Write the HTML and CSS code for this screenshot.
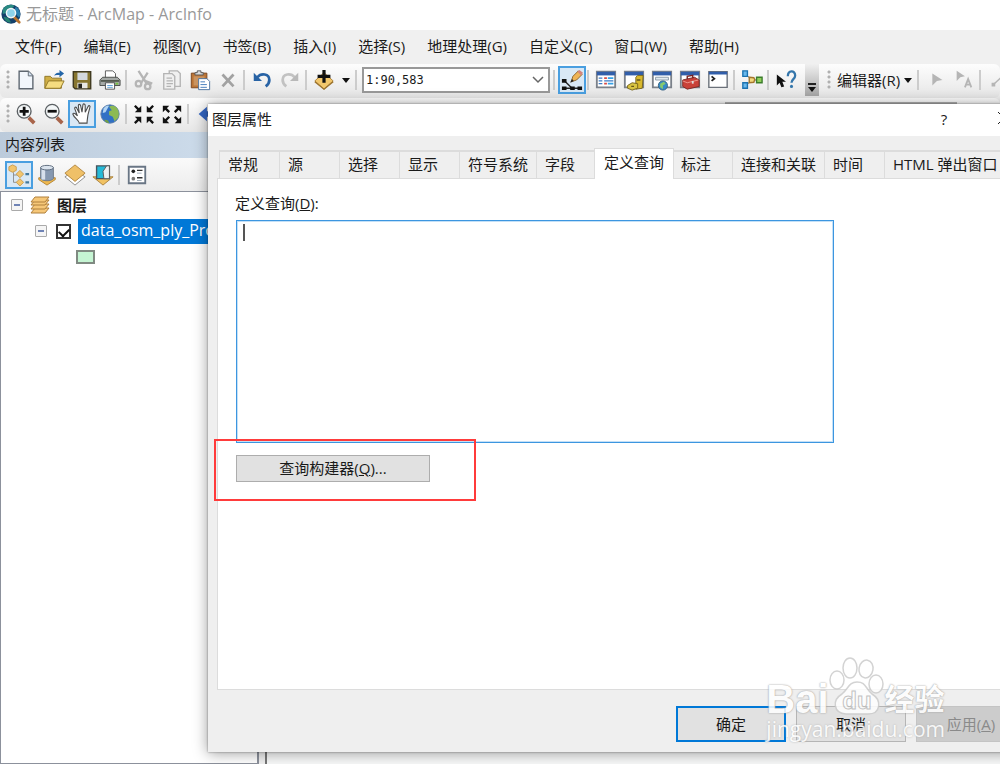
FILE: index.html
```html
<!DOCTYPE html>
<html lang="zh-CN">
<head>
  <meta charset="UTF-8">
  <meta name="viewport" content="width=device-width, initial-scale=1.0">
  <title>无标题 - ArcMap - ArcInfo</title>
  <link rel="stylesheet" href="styles.css">
</head>
<body>
  <div class="app">
    <header class="titlebar">
      <svg class="app-icon" viewBox="0 0 24 24">
        <circle cx="12" cy="12" r="10.5" fill="#14406b"/>
        <path d="M3 7C6 2 12 1 16 3l-3 3-4 0-2 5-4 1z" fill="#2a8a82"/>
        <path d="M17 4c5 3 6 8 4 12l-3-3-2-5z" fill="#2b7fae"/>
        <path d="M4 15l5 1 3 5C8 22 5 19 4 15z" fill="#248272"/>
        <path d="M15 15l6 6" stroke="#b9722c" stroke-width="3" stroke-linecap="round"/>
        <circle cx="12" cy="11" r="5" fill="#8fd3ea" stroke="#f2f6f8" stroke-width="1.6"/>
      </svg>
      <span>无标题 - ArcMap - ArcInfo</span>
    </header>

    <nav class="menubar">
      <button>文件(F)</button>
      <button>编辑(E)</button>
      <button>视图(V)</button>
      <button>书签(B)</button>
      <button>插入(I)</button>
      <button>选择(S)</button>
      <button>地理处理(G)</button>
      <button>自定义(C)</button>
      <button>窗口(W)</button>
      <button>帮助(H)</button>
    </nav>

    <div class="toolbar">
      <span class="grip"></span>
      <button class="tool" aria-label="新建">
        <svg viewBox="0 0 24 24"><path d="M4.5 2.5h10l5 5v14h-15z" fill="#f1f6fc" stroke="#5d6670" stroke-width="1.5"/><path d="M14.500 2.500v5h5" fill="#d4e2f2" stroke="#5d6670"/></svg>
      </button>
      <button class="tool" aria-label="打开">
        <svg viewBox="0 0 24 24"><path d="M2 21V8h6l2 2h10v11z" fill="#cfae45" stroke="#8d7425"/><path d="M2 21l4-8h17l-4 8z" fill="#f5dc80" stroke="#8d7425"/><path d="M12 7c2-3 4-3 6-3V1l5 4-5 4V6.500c-2 0-4 0-6 .5z" fill="#2466a8"/></svg>
      </button>
      <button class="tool" aria-label="保存">
        <svg viewBox="0 0 24 24"><path d="M2.500 3h19v18.500h-17l-2-2z" fill="#877630" stroke="#403a20" stroke-width="1.500"/><path d="M7 4h11v8H7z" fill="#d3d8dd"/><path d="M7 15h11v6H7z" fill="#e8e8e4"/><path d="M8 16h4v5H8z" fill="#24241e"/></svg>
      </button>
      <button class="tool" aria-label="打印">
        <svg viewBox="0 0 24 24"><path d="M7 10V2h8l3 3v5" fill="#fff" stroke="#555"/><path d="M1 12l3-3h16l3 3v6H1z" fill="#a5a9a6" stroke="#454845"/><path d="M2 12h20v2H2z" fill="#54594f"/><path d="M18 16h3" stroke="#74c33e" stroke-width="2"/><path d="M7 15h10v7H7z" fill="#fff" stroke="#4a4a4a"/><path d="M9 18h6M9 20h6" stroke="#579bd2"/></svg>
      </button>
      <span class="sep"></span>
      <button class="tool" aria-label="剪切" disabled>
        <svg viewBox="0 0 24 24" fill="none" stroke="#b5b5b5" stroke-width="2.5"><path d="M6 2l9 14M16 4l-7 11"/><circle cx="6" cy="16" r="3"/><circle cx="16" cy="19" r="3"/><path d="M13 13l8 3"/></svg>
      </button>
      <button class="tool" aria-label="复制" disabled>
        <svg viewBox="0 0 24 24" fill="#f0f0f0" stroke="#b4b4b4" stroke-width="1.5"><path d="M9 2h9l3 3v14H9z"/><path d="M3 5h9l3 3v14H3z"/><path d="M6 10h6M6 13h7M6 16h7M6 19h5"/></svg>
      </button>
      <button class="tool" aria-label="粘贴">
        <svg viewBox="0 0 24 24"><path d="M2.500 4.500h17v16h-17z" fill="#ba7436" stroke="#77431d"/><path d="M6.500 6.500V4H9V2h4v2h2.500v2.500z" fill="#d9d9d9" stroke="#555"/><path d="M5 8h12v10H5z" fill="#c9935f"/><path d="M10.500 10.500h9l3 3v9h-12z" fill="#fff" stroke="#47709f"/><path d="M12.500 14h5M12.500 17h7M12.500 20h7" stroke="#3c76b8"/></svg>
      </button>
      <button class="tool" aria-label="删除" disabled>
        <svg viewBox="0 0 24 24"><path d="M6 6l12 13M18 6L6 19" stroke="#a2a2a2" stroke-width="3"/></svg>
      </button>
      <span class="sep"></span>
      <button class="tool" aria-label="撤消">
        <svg viewBox="0 0 24 24"><path d="M7 9c4-5 13-4 13 3 0 3-1 5-4 7" fill="none" stroke="#2863a5" stroke-width="3"/><path d="M3 4v9h9z" fill="#2863a5"/></svg>
      </button>
      <button class="tool" aria-label="恢复" disabled>
        <svg viewBox="0 0 24 24"><path d="M17 9C13 4 4 5 4 12c0 3 1 5 4 7" fill="none" stroke="#c2c2c2" stroke-width="3"/><path d="M21 4v9h-9z" fill="#b9b9b9"/></svg>
      </button>
      <span class="sep"></span>
      <button class="tool" aria-label="添加数据">
        <svg viewBox="0 0 24 24"><path d="M2 13l10-9 10 9-10 9z" fill="#f2c76c" stroke="#a87d35"/><path d="M2 14l10 8 10-8" fill="none" stroke="#9c742f" stroke-width="1.500"/><path d="M12 1v14M5 8h14" stroke="#111" stroke-width="3.500"/></svg>
      </button>
      <button class="drop" aria-label="添加数据选项"><span class="caret"></span></button>
      <span class="sep"></span>
      <div class="scale">
        <select aria-label="比例尺"><option>1:90,583</option></select>
        <svg viewBox="0 0 12 8"><path d="M1 1l5 5 5-5" fill="none" stroke="#666" stroke-width="1.5"/></svg>
      </div>
      <span class="sep"></span>
      <button class="tool active" aria-label="编辑器工具条">
        <svg viewBox="0 0 24 24"><path d="M4 13l8 8M3 21h18" stroke="#222" stroke-width="1.500"/><path d="M1 11h5v4H1zM1 19h5v4H1zM10 19h5v4h-5zM18 19h5v4h-5z" fill="#111"/><path d="M11 14l2-6 6-6 4 4-6 6z" fill="#efb456" stroke="#89622c"/><path d="M18 3l2-2 4 3-2 3z" fill="#d3857d"/><path d="M10 15l2-4 2 2z" fill="#222"/></svg>
      </button>
      <span class="sep"></span>
      <button class="tool" aria-label="内容列表">
        <svg viewBox="0 0 24 24"><path d="M2 3h20v17H2z" fill="#fff" stroke="#7b818a" stroke-width="2"/><path d="M2 3h20v4H2z" fill="#315eaa"/><path d="M10 10h3M10 16h3" stroke="#d84b46" stroke-width="2"/><path d="M4 10h4M4 13h4M4 16h4M10 13h10" stroke="#3d7bc5" stroke-width="1.500"/><path d="M14 10h6M14 16h6" stroke="#35a1e7" stroke-width="2"/></svg>
      </button>
      <button class="tool" aria-label="目录">
        <svg viewBox="0 0 24 24"><path d="M2 3h20v17H2z" fill="#fff" stroke="#7b818a" stroke-width="2"/><path d="M2 3h20v4H2z" fill="#315eaa"/><path d="M14 9l2-2h6l-1 14-7 1z" fill="#d9b92e" stroke="#75631b"/><path d="M5 18l5-3 6 1v5l-6 2-5-2z" fill="#d9c442" stroke="#75631b"/><path d="M15 12h4M9 19h3" stroke="#665619" stroke-width="1.500"/></svg>
      </button>
      <button class="tool" aria-label="搜索">
        <svg viewBox="0 0 24 24"><path d="M2 3h20v17H2z" fill="#fff" stroke="#7b818a" stroke-width="2"/><path d="M2 3h20v4H2z" fill="#315eaa"/><path d="M5 9h14v3H5z" fill="#e2eaf0" stroke="#8897a4"/><circle cx="13" cy="18" r="5" fill="#358bc7" stroke="#356080"/><path d="M10 16l4-2 2 2-3 2 0 4-3-2z" fill="#87c96d"/></svg>
      </button>
      <button class="tool" aria-label="工具箱">
        <svg viewBox="0 0 24 24"><path d="M2 3h20v17H2z" fill="#fff" stroke="#7b818a" stroke-width="2"/><path d="M2 3h20v4H2z" fill="#315eaa"/><path d="M4 12l13-3 5 3v7L9 22l-5-3z" fill="#c94138" stroke="#7a2925"/><path d="M4 13l5 2 12-3" fill="none" stroke="#f19b91"/><path d="M9 11V8l6-1v3" fill="none" stroke="#722" stroke-width="1.500"/><path d="M15 13v3" stroke="#ddd" stroke-width="2"/></svg>
      </button>
      <button class="tool" aria-label="Python">
        <svg viewBox="0 0 24 24"><path d="M2 3h20v17H2z" fill="#fff" stroke="#6b717a" stroke-width="1.500"/><path d="M2 3h20v3H2z" fill="#315eaa"/><path d="M5 8l3 2.500L5 13" fill="none" stroke="#222" stroke-width="2"/></svg>
      </button>
      <span class="sep"></span>
      <button class="tool" aria-label="模型构建器">
        <svg viewBox="0 0 24 24"><path d="M6 6l5 6-5 6M14 12h4" fill="none" stroke="#666"/><path d="M2 2h5v6H2zM2 15h5v6H2z" fill="#69b9ed" stroke="#1c73b1" stroke-width="1.500"/><path d="M9 9l5 .5 1 2-1 3-5 .5z" fill="#f3d77c" stroke="#a3762c" stroke-width="1.500"/><path d="M17 9h6v6h-6z" fill="#91cf5a" stroke="#3b7c2b" stroke-width="1.500"/></svg>
      </button>
      <span class="sep"></span>
      <button class="tool" aria-label="这是什么?">
        <svg viewBox="0 0 24 24"><path d="M2 6v12l3-3 2 5 3-1-2-5h4z" fill="#111"/><path d="M14 8c0-7 8-7 8-1 0 4-4 4-4 8" fill="none" stroke="#3476ab" stroke-width="2.500"/><circle cx="18" cy="19" r="1.700" fill="#3476ab"/></svg>
      </button>
      <button class="overflow" aria-label="工具栏选项"><span class="bar"></span><span class="caret"></span></button>
      <span class="grip"></span>
      <button class="editor">编辑器(R)<span class="caret"></span></button>
      <span class="sep"></span>
      <button class="tool" aria-label="编辑工具" disabled>
        <svg viewBox="0 0 24 24"><path d="M8 5l11 7-6 1-5 5z" fill="#b5b5b5"/></svg>
      </button>
      <button class="tool" aria-label="编辑注记工具" disabled>
        <svg viewBox="0 0 24 24"><path d="M4 2l9 6-5 1-4 4z" fill="#b5b5b5"/><path d="M13 20l3.500-9 3.500 9M14.500 17h4" fill="none" stroke="#b5b5b5" stroke-width="2"/></svg>
      </button>
      <span class="sep"></span>
      <button class="tool" aria-label="直线段" disabled>
        <svg viewBox="0 0 24 24"><path d="M7 17L19 6" stroke="#b5b5b5" stroke-width="1.500"/><path d="M5 15h4v4H5zM17 4h4v4h-4z" fill="#b5b5b5"/></svg>
      </button>
    </div>

    <div class="toolbar">
      <span class="grip"></span>
      <button class="tool" aria-label="放大">
        <svg viewBox="0 0 24 24"><path d="M15 16l6 6" stroke="#a8644a" stroke-width="4"/><circle cx="10" cy="9" r="7.500" fill="#f4f7f8" stroke="#5c6164" stroke-width="1.500"/><path d="M5 9h10M10 4v10" stroke="#111" stroke-width="3"/></svg>
      </button>
      <button class="tool" aria-label="缩小">
        <svg viewBox="0 0 24 24"><path d="M15 16l6 6" stroke="#a8644a" stroke-width="4"/><circle cx="10" cy="9" r="7.500" fill="#f4f7f8" stroke="#5c6164" stroke-width="1.500"/><path d="M5 9h10" stroke="#111" stroke-width="3"/></svg>
      </button>
      <button class="tool active" aria-label="平移">
        <svg viewBox="0 0 24 24"><path d="M9 22c0-3-6-6-7-10 1-2 3 0 5 2L4 6c0-2 2-2 2.500 0L9 11 8 3c0-2 2-2 2.500 0l1.500 7 1-8c.5-2 2.500-1 2.500 1l0 7 3-6c1-2 3-1 2 1l-2 8c-.5 4-1 6-1 9z" fill="#fff" stroke="#4d4d4d" stroke-width="1.200"/></svg>
      </button>
      <button class="tool" aria-label="全图">
        <svg viewBox="0 0 24 24"><circle cx="12" cy="12" r="10" fill="#3070c5" stroke="#6080a8"/><path d="M11 4c3-2 7-1 9 2 2 4 2 6 1 10l-4 4-2-5-4-2 0-4 3-1z" fill="#8cba54"/><path d="M6 18l4 1 1 3c-3 0-5-2-5-4z" fill="#729f43"/><path d="M5 6c2-3 4-3 6-3l-4 7-3 1z" fill="#b2d5f3"/></svg>
      </button>
      <span class="sep"></span>
      <button class="tool" aria-label="固定比例放大">
        <svg viewBox="0 0 24 24"><path d="M2 3l5 5M22 3l-5 5M2 22l5-5M22 22l-5-5" stroke="#111" stroke-width="2.500"/><path d="M9 3v7H2zM15 3v7h7zM9 22v-7H2zM15 22v-7h7z" fill="#111"/></svg>
      </button>
      <button class="tool" aria-label="固定比例缩小">
        <svg viewBox="0 0 24 24"><path d="M4 5l5 5M20 5l-5 5M4 20l5-5M20 20l-5-5" stroke="#111" stroke-width="2.500"/><path d="M2 3h7l-7 7zM22 3h-7l7 7zM2 22h7l-7-7zM22 22h-7l7-7z" fill="#111"/></svg>
      </button>
      <span class="sep"></span>
      <button class="tool" aria-label="返回上一视图">
        <svg viewBox="0 0 24 24"><path d="M4 12l9-8v5h9v6h-9v5z" fill="#3264c0"/></svg>
      </button>
      <div class="docked-edge"></div>
    </div>

    <main class="workspace">
      <aside class="toc">
        <h2>内容列表</h2>
        <div class="toc-tools">
          <button class="tool active" aria-label="按绘制顺序列出">
            <svg viewBox="0 0 24 24"><path d="M6 9v11h6M6 12h6" fill="none" stroke="#8b8b8b"/><path d="M1 3l4-2 4 2v4L5 9 1 7z" fill="#f2c56d" stroke="#c99b4b"/><path d="M9 11l4-4 4 4-4 4zM9 20l4-4 4 4-4 4z" fill="#f2c56d" stroke="#c99b4b"/><path d="M19 11h4M19 20h4" stroke="#42799e" stroke-width="2.500"/></svg>
          </button>
          <button class="tool" aria-label="按源列出">
            <svg viewBox="0 0 24 24"><path d="M3 15h18v2l-9 6-9-6z" fill="#efb84e" stroke="#b1812e"/><path d="M5 4v12c2 3 12 3 14 0V4z" fill="#8698b0" stroke="#6c7989"/><path d="M8 6v11" stroke="#d7e0ec" stroke-width="4"/><ellipse cx="12" cy="4" rx="7" ry="2.500" fill="#dae3ed" stroke="#596778"/></svg>
          </button>
          <button class="tool" aria-label="按可见性列出">
            <svg viewBox="0 0 24 24"><path d="M1 14l11 9 11-9-11-7z" fill="#fff" stroke="#888"/><path d="M1 10l11-9 11 9-11 9z" fill="#efc068" stroke="#b1843c"/></svg>
          </button>
          <button class="tool" aria-label="按选择列出">
            <svg viewBox="0 0 24 24"><path d="M1 14h22l-11 9z" fill="#f1c262" stroke="#a97e37"/><path d="M5 2h14v14H5z" fill="#25bad8" stroke="#49545c" stroke-width="1.500"/><path d="M19 2v14h-6l-1-8 4-6z" fill="#edf1f2" stroke="#555"/></svg>
          </button>
          <span class="sep"></span>
          <button class="tool" aria-label="选项">
            <svg viewBox="0 0 24 24"><path d="M3 3h18v18H3z" fill="#fff" stroke="#697685" stroke-width="2"/><circle cx="8" cy="8" r="2" fill="#222"/><circle cx="8" cy="16" r="2" fill="#777"/><path d="M12 7h6M12 15h6" stroke="#333" stroke-width="1.500"/><path d="M12 10h5M12 18h5" stroke="#9aa8b6"/></svg>
          </button>
        </div>
        <div class="tree">
          <div class="node">
            <button class="toggle" aria-label="折叠"></button>
            <svg class="layers-icon" viewBox="0 0 20 18"><g fill="#f6c778" stroke="#b0803d"><path d="M1 17l4-5h14l-4 5z"/><path d="M1 13l4-5h14l-4 5z"/><path d="M1 9l4-5h14l-4 5z"/><path d="M1 6l4-5h14l-4 5z"/></g></svg>
            <strong>图层</strong>
          </div>
          <div class="node child">
            <button class="toggle" aria-label="折叠"></button>
            <input type="checkbox" id="layer" checked>
            <label for="layer">data_osm_ply_Project</label>
          </div>
          <div class="node symbol"><span class="swatch"></span></div>
        </div>
      </aside>
      <section class="map"></section>
    </main>

    <section class="dialog" role="dialog" aria-labelledby="dialog-title">
      <div class="dialog-title">
        <h1 id="dialog-title">图层属性</h1>
        <button aria-label="帮助">?</button>
        <button aria-label="关闭"><svg viewBox="0 0 14 14"><path d="M1 1l12 12M13 1L1 13" stroke="#222"/></svg></button>
      </div>
      <div class="dialog-body">
        <div class="tabs" role="tablist">
          <button role="tab">常规</button>
          <button role="tab">源</button>
          <button role="tab">选择</button>
          <button role="tab">显示</button>
          <button role="tab">符号系统</button>
          <button role="tab">字段</button>
          <button role="tab" class="selected" aria-selected="true">定义查询</button>
          <button role="tab">标注</button>
          <button role="tab">连接和关联</button>
          <button role="tab">时间</button>
          <button role="tab">HTML 弹出窗口</button>
        </div>
        <div class="panel" role="tabpanel">
          <label for="query">定义查询(<u>D</u>):</label>
          <div class="query">
            <textarea id="query"></textarea>
            <span class="text-cursor"></span>
          </div>
          <div class="builder">
            <button>查询构建器(<u>Q</u>)...</button>
            <span class="highlight"></span>
          </div>
        </div>
        <div class="actions">
          <button class="default">确定</button>
          <button>取消</button>
          <button disabled>应用(<u>A</u>)</button>
        </div>
      </div>
    </section>

    <div class="watermark">
      <div class="brand">
        <span class="bai">Bai</span>
        <svg class="paw" viewBox="0 0 56 58">
          <g fill="#fff" stroke="#ccc" stroke-width="1.5">
            <ellipse cx="8" cy="23" rx="7" ry="9"/>
            <ellipse cx="21" cy="11" rx="7" ry="10"/>
            <ellipse cx="37" cy="12" rx="7" ry="9" transform="rotate(10 37 12)"/>
            <ellipse cx="47" cy="27" rx="7" ry="9"/>
            <path d="M28 25c-8 0-9 7-15 12-10 6-9 19 4 20 7 0 15 0 22 0 13 0 14-14 4-20-7-6-6-12-15-12z"/>
          </g>
          <text x="28" y="52" text-anchor="middle">du</text>
        </svg>
        <span class="jy">经验</span>
      </div>
      <span class="site">jingyan.baidu.com</span>
    </div>
  </div>
</body>
</html>
```
FILE: styles.css
```css
* {
  box-sizing: border-box;
}
body {
  margin: 0;
  font-family: "Open Sans", "Noto Sans CJK SC", sans-serif;
  font-size: 15px;
  line-height: 20px;
  color: #1a1a1a;
}
button, select, textarea {
  font: inherit;
  color: inherit;
  margin: 0;
}
button {
  padding: 0;
  border: none;
  background: none;
  white-space: nowrap;
}
h1, h2 {
  margin: 0;
  font-size: 15px;
  font-weight: normal;
}
.app {
  position: relative;
  display: flex;
  flex-direction: column;
  height: 100vh;
  overflow: hidden;
  background: #f0f0f0;
}

/* window title and menu */
.titlebar {
  display: flex;
  align-items: center;
  gap: 4px;
  height: 30px;
  padding-bottom: 2px;
  background: #fff;
  color: #999;
  font-size: 16px;
}
.app-icon {
  width: 22px;
  height: 22px;
}
.menubar {
  display: flex;
  align-items: center;
  gap: 22px;
  height: 34px;
  padding: 0 0 2px 15px;
}

/* toolbars */
.toolbar {
  display: flex;
  flex: none;
  align-items: center;
  height: 34px;
  padding: 0 0 2px 3px;
  border-radius: 6px;
  background: linear-gradient(#fdfdfd, #e6e6e6);
}
.toolbar > *, .toc-tools > * {
  flex: none;
}
.grip {
  width: 9px;
  height: 20px;
  background: radial-gradient(circle at 5px 2px, #b0b0b0 1px, transparent 2px) 0 0 / 9px 5px;
}
.sep {
  width: 6px;
  height: 20px;
  background: linear-gradient(#ccc, #ccc) 1px 0 / 2px 100% no-repeat;
}
.tool {
  display: flex;
  align-items: center;
  justify-content: center;
  width: 28px;
  height: 28px;
}
.tool svg {
  width: 22px;
  height: 22px;
}
.tool.active {
  border: 2px solid #4a9fe0;
  background: #d9e8f5;
}
.caret {
  border: 4px solid transparent;
  border-top: 5px solid #111;
  border-bottom: none;
}
.drop {
  display: flex;
  align-items: center;
  justify-content: center;
  width: 16px;
  height: 28px;
}
.scale {
  position: relative;
  width: 188px;
  margin: 0 2px;
}
.scale select {
  display: block;
  width: 100%;
  height: 26px;
  padding: 0 2px;
  border: 2px solid #999;
  border-radius: 0;
  background: #fff;
  font-family: "DejaVu Sans Mono", monospace;
  font-size: 12px;
  appearance: none;
}
.scale svg {
  position: absolute;
  right: 6px;
  top: 9px;
  width: 12px;
  height: 8px;
}
.overflow {
  display: flex;
  flex-direction: column;
  align-items: center;
  justify-content: flex-end;
  gap: 2px;
  width: 14px;
  height: 32px;
  margin: 0 5px;
  padding-bottom: 4px;
  background: linear-gradient(#f0f0f0, #a5a5a5);
}
.overflow .bar {
  width: 8px;
  height: 2px;
  background: #222;
}
.editor {
  display: flex;
  align-items: center;
  gap: 4px;
  padding: 0 4px;
}
.docked-edge {
  width: 232px;
  height: 24px;
  margin-left: 505px;
  border-top: 2px solid #b0b0b0;
}

/* table of contents */
.workspace {
  display: flex;
  flex: 1;
  gap: 6px;
}
.toc {
  display: flex;
  flex-direction: column;
  width: 259px;
}
.toc h2 {
  padding: 2px 5px 4px;
  background: linear-gradient(90deg, #bccbdb, #d0dfee);
}
.toc-tools {
  display: flex;
  align-items: center;
  height: 33px;
  padding-left: 5px;
  background: linear-gradient(#fafafa, #ececec);
}
.tree {
  flex: 1;
  border: 1px solid #8c919c;
  border-right-width: 2px;
  background: #fff;
}
.node {
  display: flex;
  align-items: center;
  height: 26px;
  padding-left: 10px;
}
.child {
  padding-left: 34px;
}
.symbol {
  padding-left: 75px;
}
.toggle {
  width: 12px;
  height: 12px;
  border: 1px solid #aaa;
  border-radius: 1px;
  background: linear-gradient(#6f83b5, #6f83b5) center / 6px 2px no-repeat #f5f5f5;
}
.layers-icon {
  width: 20px;
  height: 18px;
  margin: 0 7px;
}
.node input {
  display: flex;
  width: 15px;
  height: 15px;
  margin: 0 7px 0 9px;
  border: 2px solid #333;
  background: #fff;
  appearance: none;
}
.node input:checked::before {
  content: "";
  width: 9px;
  height: 5px;
  margin: 2px 0 0 1px;
  border: solid #111;
  border-width: 0 0 2px 2px;
  transform: rotate(-45deg);
}
.node label {
  flex: 1;
  height: 25px;
  padding: 1px 3px;
  overflow: hidden;
  background: #0078d7;
  color: #fff;
  font-size: 16px;
  line-height: 20px;
}
.swatch {
  width: 19px;
  height: 14px;
  border: 2px solid #808a82;
  background: #c5f5d3;
}
.map {
  flex: 1;
  border-left: 2px solid #777;
  background: #f8f9f9;
}

/* layer properties dialog, runs past the right edge of the window */
.dialog {
  position: absolute;
  top: 104px;
  left: 208px;
  right: -34px;
  bottom: 12px;
  display: flex;
  flex-direction: column;
  background: #efefef;
  box-shadow: 0 1px 14px rgba(0, 0, 0, 0.4), 0 0 2px rgba(0, 0, 0, 0.4);
}
.dialog-title {
  display: flex;
  align-items: center;
  height: 32px;
  padding: 0 0 2px 4px;
  background: #fff;
}
.dialog-title h1 {
  flex: 1;
}
.dialog-title button {
  width: 60px;
}
.dialog-title svg {
  width: 14px;
  height: 14px;
}
.dialog-body {
  display: flex;
  flex: 1;
  flex-direction: column;
  padding: 12px 10px 10px 9px;
}
.tabs {
  display: flex;
  align-items: flex-end;
  height: 30px;
  padding-left: 2px;
}
.tabs button {
  flex: none;
  min-width: 60px;
  height: 28px;
  padding: 0 8px 2px;
  border: 1px solid #dcdcdc;
  border-width: 2px 0 0 1px;
  text-align: left;
}
.tabs .selected {
  position: relative;
  height: 31px;
  margin: 0 -2px -1px;
  padding: 0 9px 4px;
  border-width: 1px 1px 0;
  background: #fff;
}
.panel {
  flex: 1;
  padding: 14px 18px;
  border: 1px solid #dcdcdc;
  background: #fff;
}
.panel label {
  display: block;
  margin: 0 0 7px -1px;
}
.query {
  position: relative;
  max-width: 598px;
}
.query textarea {
  display: block;
  width: 100%;
  height: 223px;
  border: 1px solid #3c96e0;
  border-radius: 0;
  outline: 1px solid #c4e0f7;
  outline-offset: -2px;
  resize: none;
}
.text-cursor {
  position: absolute;
  top: 4px;
  left: 7px;
  width: 2px;
  height: 17px;
  background: #555;
}
.builder {
  position: relative;
  display: inline-block;
  margin-top: 12px;
}
.builder button {
  width: 194px;
  height: 27px;
  padding-bottom: 2px;
  border: 1px solid #adadad;
  background: #e1e1e1;
}
.highlight {
  position: absolute;
  top: -16px;
  left: -22px;
  width: 262px;
  height: 62px;
  border: 2px solid #ff3b3b;
}
.actions {
  display: flex;
  justify-content: flex-end;
  gap: 10px;
  padding: 16px 0 0;
  margin-right: -2px;
}
.actions button {
  width: 110px;
  height: 36px;
  border: 1px solid #b5b5b5;
  background: #e1e1e1;
}
.actions .default {
  border: 2px solid #0078d7;
}
.actions button:disabled {
  border-color: #c4c4c4;
  background: #ccc;
  color: #8a8a8a;
}

.watermark {
  position: absolute;
  right: 55px;
  bottom: 21px;
  display: flex;
  flex-direction: column;
  color: #fff;
  opacity: 0.85;
  pointer-events: none;
}
.brand {
  display: flex;
  align-items: flex-end;
}
.bai {
  font: bold 40px/32px "Liberation Sans", sans-serif;
  text-shadow: 0 0 2px #999, 0 0 1px #aaa;
}
.paw {
  width: 56px;
  height: 58px;
}
.paw text {
  font: bold 24px "Liberation Sans", sans-serif;
  fill: #fff;
  stroke: #bbb;
  stroke-width: 1px;
}
.jy {
  font: bold 30px/36px "Noto Sans CJK SC", sans-serif;
  text-shadow: 0 0 2px #999, 0 0 1px #aaa;
}
.site {
  font-size: 21px;
  line-height: 28px;
  text-shadow: 0 0 2px #aaa;
}
```
